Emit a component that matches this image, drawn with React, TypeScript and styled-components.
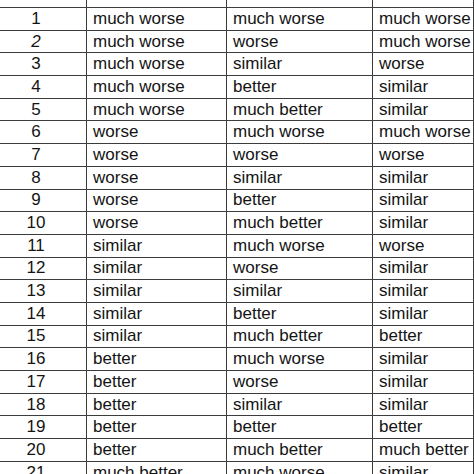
import { createGlobalStyle, styled } from "styled-components";

const GlobalStyle = createGlobalStyle`
  html, body {
    margin: 0;
    padding: 0;
    background: #fff;
    overflow: hidden;
  }
  body {
    font-family: "Liberation Sans", Arial, sans-serif;
    color: #141414;
  }
`;

const Table = styled.div`
  display: flex;
  flex-direction: column;
  width: 474px;
  height: 474px;
  overflow: hidden;
`;

const Row = styled.div<{ $height: number }>`
  display: grid;
  grid-template-columns: 87px 140px 146px 101px;
  flex: 0 0 ${(p) => p.$height}px;
  height: ${(p) => p.$height}px;
  box-sizing: border-box;
  border-bottom: 1px solid #3c3c3c;
`;

const Cell = styled.div`
  display: flex;
  align-items: center;
  box-sizing: border-box;
  border-right: 1px solid #3c3c3c;
  padding-left: 6px;
  font-size: 17px;
  white-space: nowrap;
  overflow: hidden;
`;

const NumCell = styled(Cell)<{ $italic?: boolean }>`
  justify-content: center;
  padding-left: 0;
  padding-right: 14px;
  font-style: ${(p) => (p.$italic ? "italic" : "normal")};
`;

const rows: [string, string, string, string][] = [
  ["1", "much worse", "much worse", "much worse"],
  ["2", "much worse", "worse", "much worse"],
  ["3", "much worse", "similar", "worse"],
  ["4", "much worse", "better", "similar"],
  ["5", "much worse", "much better", "similar"],
  ["6", "worse", "much worse", "much worse"],
  ["7", "worse", "worse", "worse"],
  ["8", "worse", "similar", "similar"],
  ["9", "worse", "better", "similar"],
  ["10", "worse", "much better", "similar"],
  ["11", "similar", "much worse", "worse"],
  ["12", "similar", "worse", "similar"],
  ["13", "similar", "similar", "similar"],
  ["14", "similar", "better", "similar"],
  ["15", "similar", "much better", "better"],
  ["16", "better", "much worse", "similar"],
  ["17", "better", "worse", "similar"],
  ["18", "better", "similar", "similar"],
  ["19", "better", "better", "better"],
  ["20", "better", "much better", "much better"],
  ["21", "much better", "much worse", "similar"],
];

export default function App() {
  return (
    <>
      <GlobalStyle />
      <Table>
        <Row $height={8}>
          <Cell />
          <Cell />
          <Cell />
          <Cell />
        </Row>
        {rows.map(([n, a, b, c]) => (
          <Row key={n} $height={22.7}>
            <NumCell $italic={n === "2"}>{n}</NumCell>
            <Cell>{a}</Cell>
            <Cell>{b}</Cell>
            <Cell>{c}</Cell>
          </Row>
        ))}
      </Table>
    </>
  );
}
